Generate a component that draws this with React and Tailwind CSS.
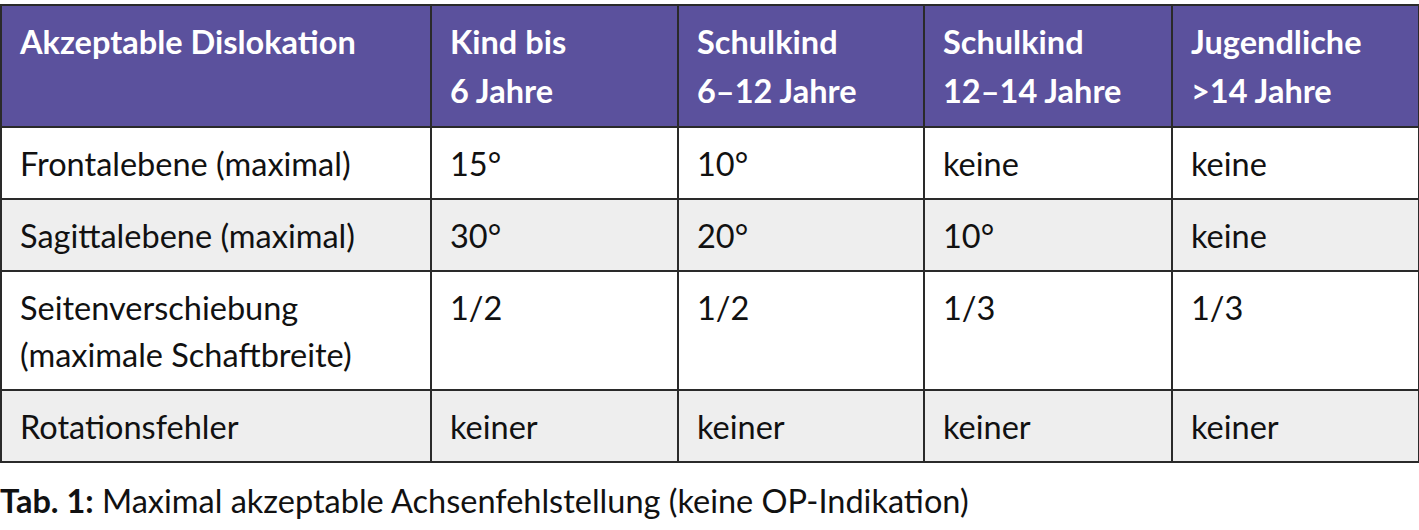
const HEADERS = [
  ['Akzeptable Dislokation'],
  ['Kind bis', '6 Jahre'],
  ['Schulkind', '6–12 Jahre'],
  ['Schulkind', '12–14 Jahre'],
  ['Jugendliche', '>14 Jahre'],
]

const ROWS = [
  { label: ['Frontalebene (maximal)'], cells: ['15°', '10°', 'keine', 'keine'], bg: 'bg-white' },
  { label: ['Sagittalebene (maximal)'], cells: ['30°', '20°', '10°', 'keine'], bg: 'bg-[#eeeeee]' },
  { label: ['Seitenverschiebung', '(maximale Schaftbreite)'], cells: ['1/2', '1/2', '1/3', '1/3'], bg: 'bg-white' },
  { label: ['Rotationsfehler'], cells: ['keiner', 'keiner', 'keiner', 'keiner'], bg: 'bg-[#eeeeee]' },
]

const COLS = ['w-[430px]', 'w-[247px]', 'w-[246px]', 'w-[248px]', 'w-[247px]']

export default function App() {
  return (
    <div className="w-[1419px] h-[530px] bg-white pt-[4px] font-['Lato',sans-serif] text-[32.5px] text-[#111]">
      <table className="w-[1418px] border-collapse table-fixed">
        <colgroup>
          {COLS.map((c, i) => <col key={i} className={c} />)}
        </colgroup>
        <thead>
          <tr className="bg-[#5b519d] text-white">
            {HEADERS.map((h, i) => (
              <th key={i} className="border-2 border-[#2a2a2a] text-left align-top font-bold px-[18px] pt-[11px] pb-[11px] leading-[49px]">
                {h.map((line, j) => <div key={j}>{line}</div>)}
              </th>
            ))}
          </tr>
        </thead>
        <tbody>
          {ROWS.map((row, i) => (
            <tr key={i} className={row.bg}>
              <td className="border-2 border-[#2a2a2a] align-top px-[18px] pt-[12px] pb-[11px] leading-[47px]">
                {row.label.map((line, j) => <div key={j}>{line}</div>)}
              </td>
              {row.cells.map((c, j) => (
                <td key={j} className="border-2 border-[#2a2a2a] align-top px-[18px] pt-[12px] pb-[11px] leading-[47px]">
                  {c}
                </td>
              ))}
            </tr>
          ))}
        </tbody>
      </table>
      <div className="mt-[18px] leading-[40px]">
        <span className="font-bold">Tab. 1:</span> Maximal akzeptable Achsenfehlstellung (keine OP-Indikation)
      </div>
    </div>
  )
}
